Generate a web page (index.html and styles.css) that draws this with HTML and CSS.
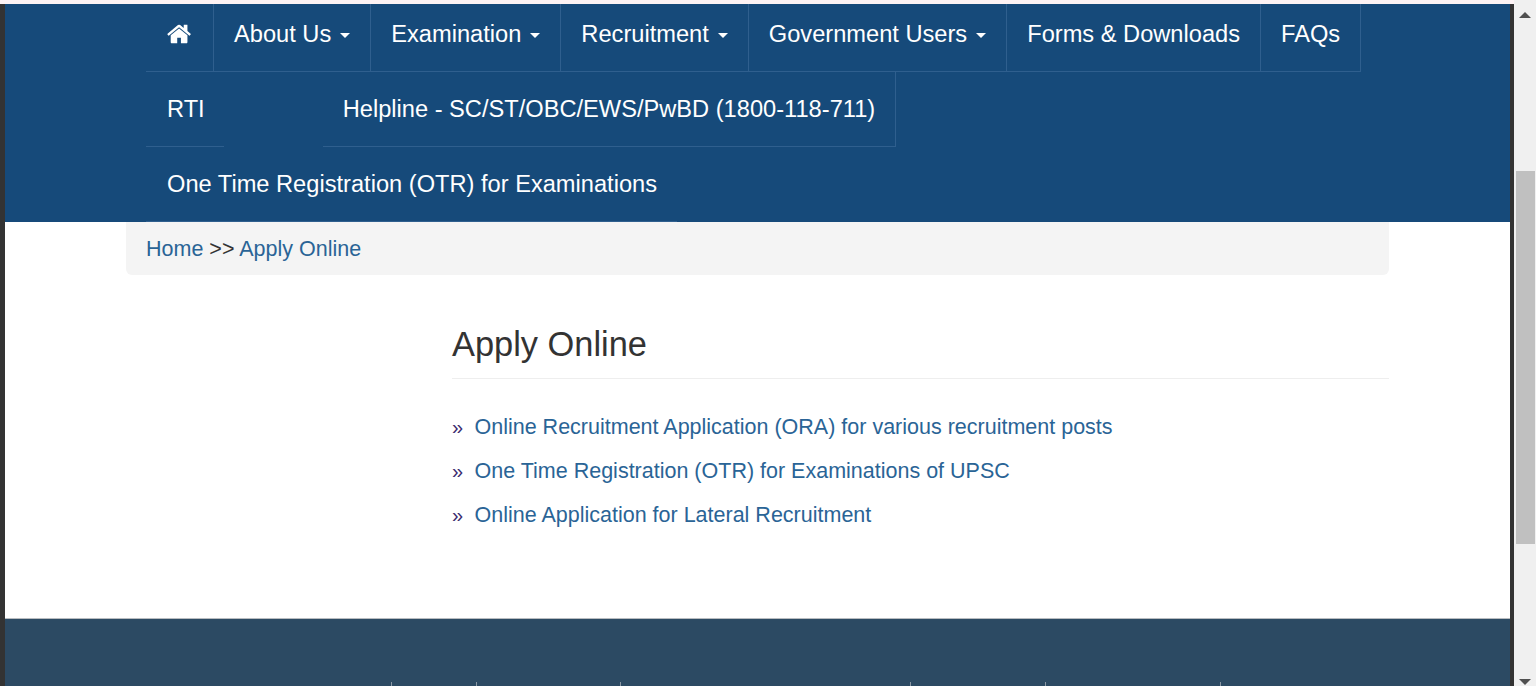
FILE: index.html
```html
<!DOCTYPE html>
<html lang="en">
<head>
<meta charset="utf-8">
<title>Apply Online</title>
<link rel="stylesheet" href="styles.css">
</head>
<body>
<div class="window">
  <div class="frame">
    <div class="top-strip"></div>
    <div class="page">
      <nav class="navbar">
        <ul class="nav">
          <li class="item first-row"><a href="#" class="home-link" aria-label="Home"><svg class="home-icon" viewBox="0 0 1792 1792"><path fill="currentColor" d="M1408 992v480q0 26-19 45t-45 19h-384v-384h-256v384h-384q-26 0-45-19t-19-45v-480q0-1 .5-3t.5-3l575-474 575 474q1 2 1 6zm223-69l-62 74q-8 9-21 11h-3q-13 0-21-7l-692-577-692 577q-12 8-24 7-13-2-21-11l-62-74q-8-10-7-23.5t11-21.5l719-599q32-26 76-26t76 26l244 204v-195q0-14 9-23t23-9h192q14 0 23 9t9 23v408l219 182q10 8 11 21.5t-7 23.5z"/></svg></a></li>
          <li class="item first-row"><a href="#">About Us<span class="caret"></span></a></li>
          <li class="item first-row"><a href="#">Examination<span class="caret"></span></a></li>
          <li class="item first-row"><a href="#">Recruitment<span class="caret"></span></a></li>
          <li class="item first-row"><a href="#">Government Users<span class="caret"></span></a></li>
          <li class="item first-row"><a href="#">Forms &amp; Downloads</a></li>
          <li class="item first-row"><a href="#">FAQs</a></li>
          <li class="break"></li>
          <li class="item plain rti"><a href="#">RTI</a></li>
          <li class="item helpline"><a href="#">Helpline - SC/ST/OBC/EWS/PwBD (1800-118-711)</a></li>
          <li class="break"></li>
          <li class="item plain"><a href="#">One Time Registration (OTR) for Examinations</a></li>
        </ul>
      </nav>
      <div class="breadcrumb"><a href="#">Home</a> &gt;&gt; <a href="#">Apply Online</a></div>
      <main class="content">
        <h1 class="title">Apply Online</h1>
        <ul class="links">
          <li><a href="#">Online Recruitment Application (ORA) for various recruitment posts</a></li>
          <li><a href="#">One Time Registration (OTR) for Examinations of UPSC</a></li>
          <li><a href="#">Online Application for Lateral Recruitment</a></li>
        </ul>
      </main>
      <footer class="footer">
        <div class="ticks"><i></i><i></i><i></i><i></i><i></i><i></i></div>
      </footer>
    </div>
  </div>
  <div class="scrollbar">
    <span class="arrow up"></span>
    <div class="track"><div class="thumb"></div></div>
    <span class="arrow down"></span>
  </div>
</div>
</body>
</html>
```
FILE: styles.css
```css
* { box-sizing: border-box; }
html, body { margin: 0; height: 100%; overflow: hidden; }
body { font-family: "Liberation Sans", Arial, sans-serif; font-size: 21.5px; color: #333; background: #fff; }
a { color: #2a6496; text-decoration: none; }

.window { display: flex; width: 1536px; height: 686px; }
.frame { flex: 0 0 1514px; display: flex; flex-direction: column; height: 686px; border-left: 5px solid #333; border-right: 4px solid #333; }
.top-strip { height: 4px; background: #fdf3f5; margin-left: -5px; margin-right: -4px; flex: none; position: relative; }
.page { flex: 1; display: flex; flex-direction: column; min-height: 0; }

.navbar { flex: none; height: 218px; background: #164a7a; padding-left: 141px; overflow: hidden; }
.nav { list-style: none; margin: 0; padding: 0; display: flex; flex-wrap: wrap; align-items: flex-start; }
.break { flex: 0 0 100%; height: 0; }
.item { height: 75px; border-bottom: 1px solid #2f5f8e; font-size: 23.65px; line-height: 27px; }
.item a { display: block; padding: 24px 20px 0; color: #fff; white-space: nowrap; }
.plain a { padding-left: 21px; }
.rti a { padding-right: 19px; }
.rti + .helpline { margin-left: 99px; }
.first-row { height: 68px; border-right: 1px solid #2f5f8e; }
.first-row a { padding-top: 17px; }
.first-row:first-child a { padding: 17px 20px 0 21px; }
.helpline { border-right: 1px solid #2f5f8e; }
.home-link { height: 47px; }
.home-icon { display: block; width: 26px; height: 26px; }
.caret { display: inline-block; width: 0; height: 0; margin-left: 9px; vertical-align: middle; border-top: 5px solid #fff; border-left: 5px solid transparent; border-right: 5px solid transparent; }

.breadcrumb { flex: none; margin-left: 121px; width: 1263px; height: 53px; padding: 14px 20px 0; background: #f4f4f4; border-radius: 0 0 6px 6px; line-height: 26px; color: #333; }

.content { flex: 1; min-height: 0; margin-left: 447px; width: 937px; }
.title { margin: 50px 0 0; height: 54px; font-size: 34.4px; line-height: 39px; font-weight: 400; color: #333; border-bottom: 1px solid #eee; }
.links { list-style: none; margin: 26px 0 0; padding: 0; }
.links li { position: relative; height: 44px; padding-left: 22.5px; line-height: 44px; white-space: nowrap; }
.links li::before { content: "\00BB"; position: absolute; left: 0; top: 0; font-size: 20px; color: #3c2a6e; }

.footer { flex: none; height: 68px; background: #2c4a63; border-top: 1px solid #b8bcc0; position: relative; }
.ticks { position: absolute; bottom: 0; left: 386px; display: flex; }
.ticks i { display: block; width: 1px; height: 4px; background: #8b98a4; }
.ticks i:nth-child(n+2) { margin-left: 84px; }
.ticks i:nth-child(3) { margin-left: 143px; }
.ticks i:nth-child(4) { margin-left: 289px; }
.ticks i:nth-child(5) { margin-left: 134px; }
.ticks i:nth-child(6) { margin-left: 174px; }

.scrollbar { flex: 0 0 22px; height: 686px; background: #f0f0f0; display: flex; flex-direction: column; align-items: center; }
.arrow { flex: none; width: 0; height: 0; border-left: 6px solid transparent; border-right: 6px solid transparent; }
.arrow.up { margin-top: 12px; border-bottom: 6px solid #505050; }
.arrow.down { margin-bottom: 1px; border-top: 6px solid #505050; }
.track { flex: 1; width: 100%; padding: 153px 1px 0 2px; }
.thumb { height: 373px; background: #c0c0c0; }
```
